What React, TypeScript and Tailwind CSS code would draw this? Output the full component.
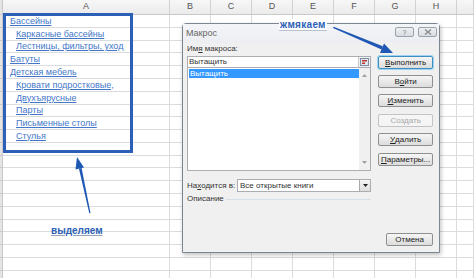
import type { ReactNode } from 'react';

/**
 * Лист Excel с окном «Макрос» поверх
 */

const COLS = ['A', 'B', 'C', 'D', 'E', 'F', 'G', 'H', ''];
const COL_W = ['w-[167px]', 'w-[41px]', 'w-[41px]', 'w-[41px]', 'w-[41px]', 'w-[41px]', 'w-[41px]', 'w-[41px]', 'w-[17px]'];

const ROW_H = [
  'h-[13px]', 'h-[13px]', 'h-[12px]', 'h-[13px]', 'h-[13px]', 'h-[13px]', 'h-[13px]', 'h-[12px]',
  'h-[13px]', 'h-[13px]', 'h-[13px]', 'h-[12px]', 'h-[13px]', 'h-[13px]', 'h-[13px]', 'h-[13px]',
  'h-[12px]', 'h-[13px]', 'h-[13px]', 'h-[13px]', 'h-[13px]',
];

const LINKS: { text: string; sub?: boolean }[] = [
  { text: 'Бассейны' },
  { text: 'Каркасные бассейны', sub: true },
  { text: 'Лестницы, фильтры, уход', sub: true },
  { text: 'Батуты' },
  { text: 'Детская мебель' },
  { text: 'Кровати подростковые,', sub: true },
  { text: 'Двухъярусные', sub: true },
  { text: 'Парты', sub: true },
  { text: 'Письменные столы', sub: true },
  { text: 'Стулья', sub: true },
];

function Key({ children }: { children: ReactNode }) {
  return <span className="underline underline-offset-1">{children}</span>;
}

function DlgButton({ children, className = '', primary = false, disabled = false }: {
  children: ReactNode;
  className?: string;
  primary?: boolean;
  disabled?: boolean;
}) {
  return (
    <div
      className={`h-[13px] flex items-center justify-center rounded-[2px] border text-[8px] leading-none bg-gradient-to-b from-[#f6f6f6] to-[#dcdcdc] ${
        primary ? 'border-[#3c8fc0] shadow-[0_0_0_1px_#9fd3ef]' : 'border-[#8e8f8f]'
      } ${disabled ? 'text-[#a8a8a8] border-[#c3c3c3] from-[#f4f4f4] to-[#f4f4f4]' : 'text-[#222]'} ${className}`}
    >
      {children}
    </div>
  );
}

function Dialog() {
  return (
    <div className="absolute left-[182px] top-[23px] w-[258px] h-[230px] flex flex-col rounded-t-[4px] border border-[#7d8590] bg-[#f0f0f0] shadow-[1px_2px_4px_rgba(0,0,0,0.25)] font-['Liberation_Sans',sans-serif]">
      {/* заголовок */}
      <div className="h-[19px] flex items-center justify-between pl-[3px] pr-[2px] bg-gradient-to-b from-[#f3f5f8] to-[#eceef1]">
        <span className="text-[9px] text-[#666] mt-[1px]">Макрос</span>
        <div className="flex gap-[4px] -mt-[3px]">
          <div className="w-[19px] h-[10px] rounded-[2px] border border-[#9aa2ab] bg-gradient-to-b from-[#eef0f2] to-[#d9dde2] flex items-center justify-center text-[7px] text-[#777] leading-none">?</div>
          <div className="w-[19px] h-[10px] rounded-[2px] border border-[#9aa2ab] bg-gradient-to-b from-[#eef0f2] to-[#d9dde2] flex items-center justify-center">
            <svg width="8" height="6" viewBox="0 0 8 6">
              <path d="M1 0.5 L7 5.5 M7 0.5 L1 5.5" stroke="#888" strokeWidth="1.3" />
            </svg>
          </div>
        </div>
      </div>

      <div className="flex flex-1 pl-[4px] pr-[6px]">
        {/* левая часть */}
        <div className="w-[185px] flex flex-col pt-[1px] text-[8px] text-[#333] leading-none">
          <div className="h-[10px] flex items-center">Им<Key>я</Key>&nbsp;макроса:</div>
          <div className="mt-[2px] h-[12px] flex border border-[#abadb3] bg-white">
            <div className="flex-1 flex items-center pl-[1px]">Вытащить</div>
            <div className="w-[12px] flex items-center justify-center bg-[#f0f0f0] border-l border-[#c9c9c9]">
              <svg width="9" height="8" viewBox="0 0 9 8">
                <rect x="0.5" y="0.5" width="8" height="7" fill="#dfe6ef" stroke="#7f8ea3" />
                <rect x="2" y="2" width="5" height="1.5" fill="#c0392b" />
                <rect x="2" y="4.5" width="3" height="1.5" fill="#c0392b" />
              </svg>
            </div>
          </div>
          <div className="h-[103px] flex border border-t-0 border-[#abadb3] bg-white">
            <div className="flex-1 pt-[1px] pl-[1px]">
              <div className="h-[9px] flex items-center bg-[#3399ff] text-white pl-[1px]">Вытащить</div>
            </div>
            <div className="w-[11px] flex flex-col justify-between items-center bg-[#f0f0f0] py-[6px]">
              <svg width="5" height="3" viewBox="0 0 5 3"><path d="M0 3 L2.5 0 L5 3Z" fill="#a0a0a0" /></svg>
              <svg width="5" height="3" viewBox="0 0 5 3"><path d="M0 0 L2.5 3 L5 0Z" fill="#a0a0a0" /></svg>
            </div>
          </div>
          <div className="mt-[8px] h-[13px] flex items-center">
            <div className="w-[50px]">На<Key>х</Key>одится в:</div>
            <div className="flex-1 h-full flex border border-[#abadb3] bg-white">
              <div className="flex-1 flex items-center pl-[2px]">Все открытые книги</div>
              <div className="w-[11px] flex items-center justify-center bg-gradient-to-b from-[#f4f4f4] to-[#dedede] border-l border-[#a8a8a8]">
                <svg width="5" height="3" viewBox="0 0 5 3"><path d="M0 0 L2.5 3 L5 0Z" fill="#222" /></svg>
              </div>
            </div>
          </div>
          <div className="mt-[2px] h-[10px] flex items-center gap-[2px]">
            <span>Описание</span>
            <div className="flex-1 h-px bg-[#d5dfe5]" />
          </div>
        </div>

        {/* кнопки */}
        <div className="w-[55px] ml-[7px] flex flex-col pt-[13px]">
          <DlgButton primary><Key>В</Key>ыполнить</DlgButton>
          <DlgButton className="mt-[6px]">В<Key>о</Key>йти</DlgButton>
          <DlgButton className="mt-[6px]"><Key>И</Key>зменить</DlgButton>
          <DlgButton className="mt-[7px]" disabled>Создать</DlgButton>
          <DlgButton className="mt-[6px]"><Key>У</Key>далить</DlgButton>
          <DlgButton className="mt-[7px]"><Key>П</Key>араметры...</DlgButton>
          <div className="flex-1" />
          <DlgButton className="ml-[8px] mb-[6px]">Отмена</DlgButton>
        </div>
      </div>
    </div>
  );
}

export default function App() {
  return (
    <div className="relative w-[474px] h-[278px] overflow-hidden bg-white font-['Liberation_Sans',sans-serif]">
      {/* заголовки столбцов */}
      <div className="flex h-[15px] bg-gradient-to-b from-[#f7f7f7] to-[#ebebeb] border-b border-[#c9c9c9]">
        <div className="w-[3px] bg-[#e4e4e4] border-r border-[#c9c9c9]" />
        {COLS.map((c, i) => (
          <div
            key={i}
            className={`${COL_W[i]} shrink-0 flex items-center justify-center border-r border-[#d2d2d2] text-[9px] text-[#555]`}
          >
            {c}
          </div>
        ))}
      </div>

      {/* строки */}
      {ROW_H.map((h, r) => (
        <div key={r} className={`flex ${h}`}>
          <div className="w-[3px] bg-[#e4e4e4] border-r border-b border-[#c9c9c9]" />
          {COLS.map((_, i) => (
            <div key={i} className={`${COL_W[i]} shrink-0 border-r border-b border-[#dadcdd] flex items-center`}>
              {i === 0 && LINKS[r] && (
                <span
                  className={`${LINKS[r].sub ? 'pl-[13px]' : 'pl-[7px]'} text-[9px] leading-none text-[#4477c9] underline underline-offset-1 whitespace-nowrap`}
                >
                  {LINKS[r].text}
                </span>
              )}
            </div>
          ))}
        </div>
      ))}

      {/* выделение */}
      <div className="absolute left-[3px] top-[13px] w-[130px] h-[140px] border-[3px] border-[#2c5fb6]" />

      <Dialog />

      {/* стрелки */}
      <svg className="absolute inset-0 pointer-events-none" width="474" height="278" viewBox="0 0 474 278">
        <path d="M90.5 213 L89.3 213.2 L78.9 168.5 L81.6 167.9 Z" fill="#1f57b5" />
        <polygon points="77,157 84,167.5 75.5,169.5" fill="#1f57b5" />
        <path d="M333 28 L333.6 26.8 L382.8 46.3 L381.6 49.5 Z" fill="#1f57b5" />
        <polygon points="393,53 380,53 384,43.5" fill="#1f57b5" />
      </svg>

      {/* подписи */}
      <div className="absolute left-[279px] top-[19px] px-[1px] bg-white text-[10px] leading-[11px] font-bold tracking-[0.3px] text-[#2c5fb6] border-b border-[#b9c2cc]">
        жмякаем
      </div>
      <div className="absolute left-[51px] top-[225px] text-[10px] leading-[11px] font-bold text-[#2c5fb6] underline decoration-[#9aa6b8] underline-offset-1">
        выделяем
      </div>
    </div>
  );
}
